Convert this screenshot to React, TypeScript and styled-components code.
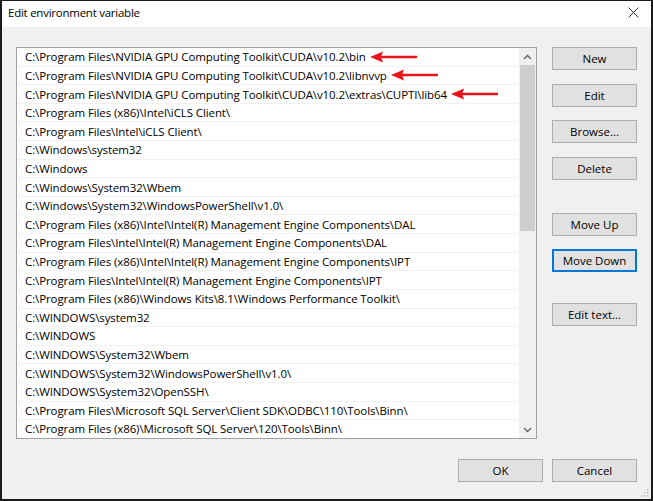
import React from "react";
import styled, { createGlobalStyle } from "styled-components";

const GlobalStyle = createGlobalStyle`
  html, body { margin: 0; padding: 0; background: #ffffff; }
  * { box-sizing: border-box; }
`;

const FONT = `"Open Sans", "Noto Sans", sans-serif`;

const Window = styled.div`
  width: 653px;
  height: 501px;
  border: 1px solid #1b1b1b;
  border-width: 1px 2px 2px 2px;
  background: #f0f0f0;
  display: flex;
  flex-direction: column;
  font-family: ${FONT};
  color: #000;
  position: relative;
`;

const TitleBar = styled.div`
  height: 26px;
  background: #ffffff;
  display: flex;
  align-items: center;
  justify-content: space-between;
  padding: 0 12px 3px 6px;
  font-size: 11.5px;
`;

const Title = styled.span`
  letter-spacing: -0.25px;
`;

const Body = styled.div`
  flex: 1;
  display: flex;
  flex-direction: column;
  padding: 20px 14px 16px 14px;
`;

const Main = styled.div`
  display: flex;
  gap: 15px;
`;

const ListBox = styled.div`
  width: 521px;
  height: 392px;
  border: 1px solid #a0a0a0;
  background: #ffffff;
  display: flex;
`;

const Rows = styled.div`
  flex: 1;
  display: flex;
  flex-direction: column;
  overflow: hidden;
`;

const Row = styled.div`
  height: 18.62px;
  flex: 0 0 18.62px;
  display: flex;
  align-items: center;
  padding-left: 8px;
  border-bottom: 1px solid #f2f2f2;
  font-size: 11.5px;
  white-space: nowrap;
`;

const RowText = styled.span`
  letter-spacing: -0.1px;
  color: #000;
`;

const Arrow = styled.svg`
  margin-left: 4px;
  flex: 0 0 auto;
`;

const ScrollBar = styled.div`
  width: 17px;
  background: #f0f0f0;
  display: flex;
  flex-direction: column;
`;

const ScrollButton = styled.div`
  height: 17px;
  display: flex;
  align-items: center;
  justify-content: center;
`;

const ScrollTrack = styled.div`
  flex: 1;
  display: flex;
  flex-direction: column;
  padding: 0 1px;
`;

const Thumb = styled.div`
  height: 166px;
  background: #cdcdcd;
`;

const ButtonColumn = styled.div`
  width: 85px;
  display: flex;
  flex-direction: column;
`;

const Button = styled.button<{ $focused?: boolean; $gap?: number }>`
  width: 85px;
  height: 23px;
  margin-top: ${(p) => p.$gap ?? 0}px;
  background: #e1e1e1;
  border: ${(p) => (p.$focused ? "2px solid #0078d7" : "1px solid #adadad")};
  font-family: ${FONT};
  font-size: 11.5px;
  color: #000;
  padding: 0;
  display: flex;
  align-items: center;
  justify-content: center;
`;

const Footer = styled.div`
  display: flex;
  justify-content: flex-end;
  gap: 9px;
  margin-top: 20px;
`;

const Grip = styled.svg`
  position: absolute;
  right: 2px;
  bottom: 2px;
`;

const rows: { text: string; arrow?: boolean }[] = [
  { text: "C:\\Program Files\\NVIDIA GPU Computing Toolkit\\CUDA\\v10.2\\bin", arrow: true },
  { text: "C:\\Program Files\\NVIDIA GPU Computing Toolkit\\CUDA\\v10.2\\libnvvp", arrow: true },
  { text: "C:\\Program Files\\NVIDIA GPU Computing Toolkit\\CUDA\\v10.2\\extras\\CUPTI\\lib64", arrow: true },
  { text: "C:\\Program Files (x86)\\Intel\\iCLS Client\\" },
  { text: "C:\\Program Files\\Intel\\iCLS Client\\" },
  { text: "C:\\Windows\\system32" },
  { text: "C:\\Windows" },
  { text: "C:\\Windows\\System32\\Wbem" },
  { text: "C:\\Windows\\System32\\WindowsPowerShell\\v1.0\\" },
  { text: "C:\\Program Files (x86)\\Intel\\Intel(R) Management Engine Components\\DAL" },
  { text: "C:\\Program Files\\Intel\\Intel(R) Management Engine Components\\DAL" },
  { text: "C:\\Program Files (x86)\\Intel\\Intel(R) Management Engine Components\\IPT" },
  { text: "C:\\Program Files\\Intel\\Intel(R) Management Engine Components\\IPT" },
  { text: "C:\\Program Files (x86)\\Windows Kits\\8.1\\Windows Performance Toolkit\\" },
  { text: "C:\\WINDOWS\\system32" },
  { text: "C:\\WINDOWS" },
  { text: "C:\\WINDOWS\\System32\\Wbem" },
  { text: "C:\\WINDOWS\\System32\\WindowsPowerShell\\v1.0\\" },
  { text: "C:\\WINDOWS\\System32\\OpenSSH\\" },
  { text: "C:\\Program Files\\Microsoft SQL Server\\Client SDK\\ODBC\\110\\Tools\\Binn\\" },
  { text: "C:\\Program Files (x86)\\Microsoft SQL Server\\120\\Tools\\Binn\\" },
];

const RedArrow = () => (
  <Arrow width="47" height="12" viewBox="0 0 47 12">
    <line x1="10" y1="6" x2="47" y2="6" stroke="#e8141b" strokeWidth="2.4" />
    <polygon points="0,6 13,0.5 11,6 13,11.5" fill="#e8141b" />
  </Arrow>
);

export default function App() {
  return (
    <>
      <GlobalStyle />
      <Window>
        <TitleBar>
          <Title>Edit environment variable</Title>
          <svg width="11" height="11" viewBox="0 0 11 11">
            <path d="M0.5 0.5 L10.5 10.5 M10.5 0.5 L0.5 10.5" stroke="#333" strokeWidth="1" fill="none" />
          </svg>
        </TitleBar>
        <Body>
          <Main>
            <ListBox>
              <Rows>
                {rows.map((r, i) => (
                  <Row key={i}>
                    <RowText>{r.text}</RowText>
                    {r.arrow && <RedArrow />}
                  </Row>
                ))}
              </Rows>
              <ScrollBar>
                <ScrollButton>
                  <svg width="9" height="6" viewBox="0 0 9 6">
                    <path d="M1 5 L4.5 1.5 L8 5" stroke="#606060" strokeWidth="1.3" fill="none" />
                  </svg>
                </ScrollButton>
                <ScrollTrack>
                  <Thumb />
                </ScrollTrack>
                <ScrollButton>
                  <svg width="9" height="6" viewBox="0 0 9 6">
                    <path d="M1 1 L4.5 4.5 L8 1" stroke="#606060" strokeWidth="1.3" fill="none" />
                  </svg>
                </ScrollButton>
              </ScrollBar>
            </ListBox>
            <ButtonColumn>
              <Button>New</Button>
              <Button $gap={13.5}>Edit</Button>
              <Button $gap={13.5}>Browse...</Button>
              <Button $gap={13.5}>Delete</Button>
              <Button $gap={33}>Move Up</Button>
              <Button $gap={13} $focused>Move Down</Button>
              <Button $gap={31}>Edit text...</Button>
            </ButtonColumn>
          </Main>
          <Footer>
            <Button>OK</Button>
            <Button>Cancel</Button>
          </Footer>
        </Body>
        <Grip width="10" height="10" viewBox="0 0 10 10">
          {[
            [8, 2],
            [8, 5],
            [5, 5],
            [8, 8],
            [5, 8],
            [2, 8],
          ].map(([x, y], i) => (
            <rect key={i} x={x} y={y} width="1.5" height="1.5" fill="#bdbdbd" />
          ))}
        </Grip>
      </Window>
    </>
  );
}
